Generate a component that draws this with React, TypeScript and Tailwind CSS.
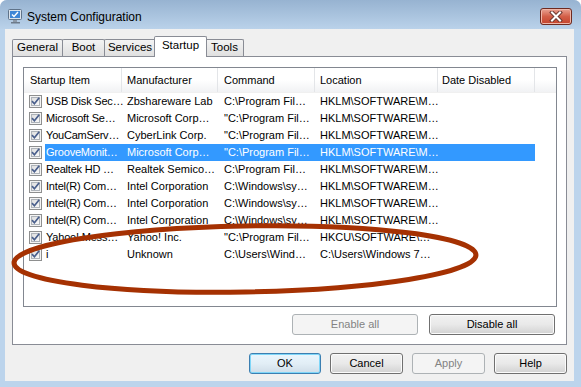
import type { ReactNode } from "react";

const FONT = { fontFamily: '"Liberation Sans", Arial, sans-serif' };

type Row = { item: string; mfr: string; cmd: string; loc: string; selected?: boolean };

const ROWS: Row[] = [
  { item: "USB Disk Sec…", mfr: "Zbshareware Lab", cmd: "C:\\Program Fil…", loc: "HKLM\\SOFTWARE\\M…" },
  { item: "Microsoft Se…", mfr: "Microsoft Corp…", cmd: "\"C:\\Program Fil…", loc: "HKLM\\SOFTWARE\\M…" },
  { item: "YouCamServ…", mfr: "CyberLink Corp.", cmd: "\"C:\\Program Fil…", loc: "HKLM\\SOFTWARE\\M…" },
  { item: "GrooveMonit…", mfr: "Microsoft Corp…", cmd: "\"C:\\Program Fil…", loc: "HKLM\\SOFTWARE\\M…", selected: true },
  { item: "Realtek HD …", mfr: "Realtek Semico…", cmd: "C:\\Program Fil…", loc: "HKLM\\SOFTWARE\\M…" },
  { item: "Intel(R) Com…", mfr: "Intel Corporation", cmd: "C:\\Windows\\sy…", loc: "HKLM\\SOFTWARE\\M…" },
  { item: "Intel(R) Com…", mfr: "Intel Corporation", cmd: "C:\\Windows\\sy…", loc: "HKLM\\SOFTWARE\\M…" },
  { item: "Intel(R) Com…", mfr: "Intel Corporation", cmd: "C:\\Windows\\sy…", loc: "HKLM\\SOFTWARE\\M…" },
  { item: "Yahoo! Mess…", mfr: "Yahoo! Inc.", cmd: "\"C:\\Program Fil…", loc: "HKCU\\SOFTWARE\\…" },
  { item: "i", mfr: "Unknown", cmd: "C:\\Users\\Wind…", loc: "C:\\Users\\Windows 7…" },
];

function CheckBox() {
  return (
    <svg width="13" height="13" viewBox="0 0 13 13" className="shrink-0">
      <defs>
        <linearGradient id="cbg" x1="0" y1="0" x2="1" y2="1">
          <stop offset="0" stopColor="#dcdcdc" />
          <stop offset="1" stopColor="#fbfbfb" />
        </linearGradient>
      </defs>
      <rect x="0.5" y="0.5" width="12" height="12" fill="#f4f4f4" stroke="#8e8f8f" />
      <rect x="2.5" y="2.5" width="8" height="8" fill="url(#cbg)" stroke="#aeb3b9" strokeWidth="1" />
      <path d="M3 6.2 L5.4 8.8 L10.2 2.8" fill="none" stroke="#4a5f8c" strokeWidth="1.7" />
    </svg>
  );
}

function Tab({ label, w, selected, first }: { label: string; w: string; selected?: boolean; first?: boolean }) {
  if (selected) {
    return (
      <div
        className={`${w} -ml-[2px] -mr-[1px] h-[21px] -mb-px relative z-10 flex items-center justify-center border border-b-0 border-[#898c95] bg-white rounded-t-[2px] pb-[2px]`}
      >
        {label}
      </div>
    );
  }
  return (
    <div
      className={`${w} ${first ? "" : "-ml-px"} h-[17px] flex items-center justify-center border border-b-0 border-[#898c95] bg-linear-to-b from-[#f3f3f3] to-[#e0e0e0] rounded-t-[2px]`}
    >
      {label}
    </div>
  );
}

function Btn({ children, w, disabled, def }: { children: ReactNode; w: string; disabled?: boolean; def?: boolean }) {
  let cls = "border-[#707070] bg-linear-to-b from-[#f2f2f2] via-[#e9e9e9] to-[#d2d2d2] shadow-[inset_0_0_0_1px_#fbfbfb] text-black";
  if (disabled) cls = "border-[#adb2b5] bg-[#f4f4f4] text-[#838383]";
  if (def) cls = "border-[#3c7fb1] bg-linear-to-b from-[#eaf6fd] via-[#e2eef6] to-[#cfdde8] shadow-[inset_0_0_0_1px_#7fd6f8] text-black";
  return (
    <div className={`${w} h-[21px] rounded-[3px] border flex items-center justify-center ${cls}`}>{children}</div>
  );
}

function AppIcon() {
  return (
    <svg width="15" height="15" viewBox="0 0 15 15">
      <rect x="0.5" y="0.5" width="13" height="10" rx="1" fill="#dbe3ec" stroke="#5f7389" />
      <rect x="2" y="2" width="10" height="7" fill="#3f86d6" />
      <path d="M4 5.5 L6 7.5 L10 3" fill="none" stroke="#ffffff" strokeWidth="1.4" />
      <rect x="5" y="11" width="4" height="2" fill="#8c99a8" />
      <rect x="3" y="13" width="9" height="1.5" fill="#6d7b8b" />
    </svg>
  );
}

export default function App() {
  return (
    <div className="w-[581px] h-[387px] bg-white relative overflow-hidden text-[11px] text-black" style={FONT}>
      <div className="w-full h-full flex flex-col bg-[#bcd4ec] rounded-t-[7px] overflow-hidden">
        {/* title bar */}
        <div className="h-[29px] shrink-0 flex items-center bg-linear-to-b from-[#97b3d1] to-[#bad2ea] pl-[8px] pr-[9px]">
          <div className="mt-[4px]">
            <AppIcon />
          </div>
          <span className="ml-[4px] mt-[4px] text-[12px] text-black">System Configuration</span>
          <div className="ml-auto mt-[3px] w-[32px] h-[17px] rounded-[3px] border border-[#6e2a20] bg-linear-to-b from-[#e8a293] via-[#d35f48] to-[#c4432c] shadow-[inset_0_0_0_1px_#efb7a9] flex items-center justify-center">
            <svg width="14" height="11" viewBox="0 0 14 11">
              <path d="M3 1.5 L11 9.5 M11 1.5 L3 9.5" stroke="#6e3a33" strokeWidth="4" strokeLinecap="square" />
              <path d="M3 1.5 L11 9.5 M11 1.5 L3 9.5" stroke="#ffffff" strokeWidth="2" strokeLinecap="square" />
            </svg>
          </div>
        </div>

        {/* client */}
        <div className="flex-1 flex flex-col ml-[5px] mr-[7px] mb-[6px] bg-[#f0f0f0] pt-[7px] pl-[7px] pr-[7px]">
          {/* tabs */}
          <div className="flex items-end h-[20px] text-[11.5px]">
            <Tab label="General" w="w-[51px]" first />
            <Tab label="Boot" w="w-[43px]" />
            <Tab label="Services" w="w-[52px]" />
            <Tab label="Startup" w="w-[53px]" selected />
            <Tab label="Tools" w="w-[39px]" />
          </div>

          {/* tab panel */}
          <div className="w-[555px] h-[289px] border border-[#898c95] bg-white pt-[10px] pl-[10px] flex flex-col">
            <div className="w-[534px] h-[240px] border border-[#828790] bg-white flex flex-col overflow-hidden">
              {/* header */}
              <div className="h-[25px] shrink-0 flex bg-linear-to-b from-[#ffffff] via-[#ffffff] to-[#f1f2f4] border-b border-[#f0f0f0]">
                <div className="w-[98px] border-r border-[#e3e5e8] pl-[6px] flex items-center">Startup Item</div>
                <div className="w-[96px] border-r border-[#e3e5e8] pl-[5px] flex items-center">Manufacturer</div>
                <div className="w-[97px] border-r border-[#e3e5e8] pl-[6px] flex items-center">Command</div>
                <div className="w-[123px] border-r border-[#e3e5e8] pl-[5px] flex items-center">Location</div>
                <div className="w-[97px] border-r border-[#e3e5e8] pl-[4px] flex items-center">Date Disabled</div>
                <div className="flex-1" />
              </div>
              {/* rows */}
              {ROWS.map((r, i) => (
                <div key={i} className="h-[17px] shrink-0 flex items-center whitespace-nowrap">
                  <div className="w-[21px] pl-[5px] flex items-center">
                    <CheckBox />
                  </div>
                  <div
                    className={`w-[490px] h-full flex items-center ${r.selected ? "bg-[#3399ff] text-white" : ""}`}
                  >
                    <div className="w-[77px] pl-[1px] tracking-[-0.2px]">{r.item}</div>
                    <div className="w-[96px] pl-[5px] overflow-hidden">{r.mfr}</div>
                    <div className="w-[97px] pl-[6px] overflow-hidden">{r.cmd}</div>
                    <div className="w-[123px] pl-[5px] overflow-hidden">{r.loc}</div>
                    <div className="w-[97px]" />
                  </div>
                </div>
              ))}
            </div>

            <div className="flex gap-[11px] mt-[7px] ml-[269px]">
              <Btn w="w-[126px]" disabled>
                Enable all
              </Btn>
              <Btn w="w-[126px]">Disable all</Btn>
            </div>
          </div>

          {/* dialog buttons */}
          <div className="flex justify-end gap-[9px] mt-[8px]">
            <Btn w="w-[72px]" def>
              OK
            </Btn>
            <Btn w="w-[73px]">Cancel</Btn>
            <Btn w="w-[73px]" disabled>
              Apply
            </Btn>
            <Btn w="w-[73px]">Help</Btn>
          </div>
        </div>
      </div>

      {/* hand-drawn annotation */}
      <svg className="absolute left-0 top-0 pointer-events-none" width="581" height="387" viewBox="0 0 581 387">
        <ellipse
          cx="245"
          cy="259"
          rx="231"
          ry="33"
          transform="rotate(-1 245 259)"
          fill="none"
          stroke="#a53102"
          strokeWidth="5"
        />
      </svg>
    </div>
  );
}
